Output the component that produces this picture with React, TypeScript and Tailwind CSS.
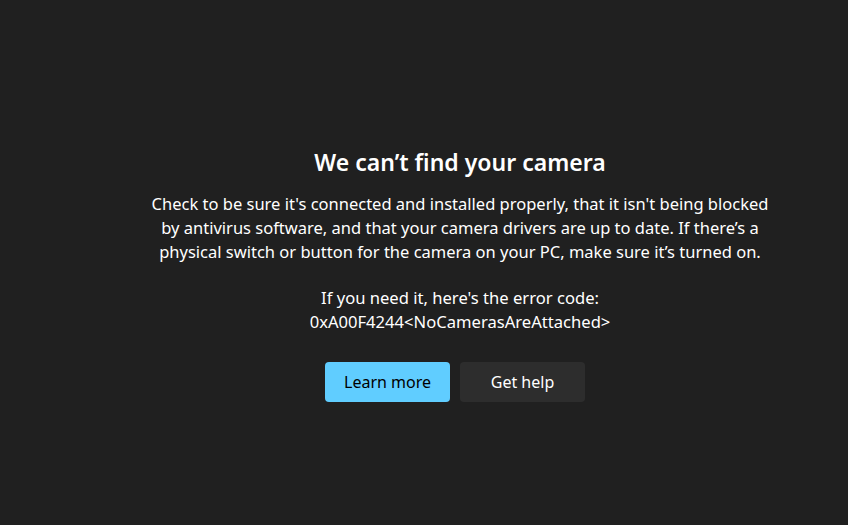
export default function App() {
  return (
    <div
      className="w-[848px] h-[525px] bg-[#202020] text-white flex flex-col items-center pt-[146px] pl-[72px]"
      style={{ fontFamily: '"Segoe UI", "Noto Sans", "Open Sans", sans-serif' }}
    >
      <h1 className="text-[23px] leading-[32px] font-semibold">We can’t find your camera</h1>
      <p className="mt-[14px] text-[16.5px] leading-[24px] text-center w-[700px]">
        Check to be sure it's connected and installed properly, that it isn't being blocked
        <br />
        by antivirus software, and that your camera drivers are up to date. If there’s a
        <br />
        physical switch or button for the camera on your PC, make sure it’s turned on.
      </p>
      <p className="mt-[22px] text-[16.6px] leading-[24px] text-center">
        If you need it, here's the error code:
        <br />
        0xA00F4244&lt;NoCamerasAreAttached&gt;
      </p>
      <div className="mt-[28px] mr-[10px] flex gap-[10px]">
        <button className="w-[125px] h-[40px] rounded-[4px] bg-[#60cdff] text-black text-[16px]">
          Learn more
        </button>
        <button className="w-[125px] h-[40px] rounded-[4px] bg-[#2d2d2d] text-white text-[16px]">
          Get help
        </button>
      </div>
    </div>
  );
}
